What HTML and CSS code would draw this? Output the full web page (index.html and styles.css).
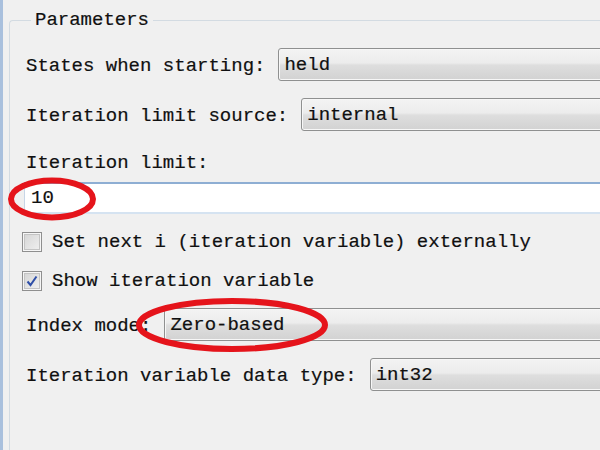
FILE: index.html
```html
<!DOCTYPE html>
<html>
<head>
<meta charset="utf-8">
<link rel="stylesheet" href="styles.css">
</head>
<body>
<div class="window">
  <fieldset class="params">
    <legend class="legend">Parameters</legend>
    <div class="row row-first">
      <span class="label">States when starting:</span>
      <div class="combo">held</div>
    </div>
    <div class="row row-next">
      <span class="label">Iteration limit source:</span>
      <div class="combo">internal</div>
    </div>
    <div class="caption">Iteration limit:</div>
    <div class="textbox">10</div>
    <label class="check check-first">
      <span class="box"></span>
      <span class="check-text">Set next i (iteration variable) externally</span>
    </label>
    <label class="check check-next">
      <span class="box">
        <svg class="tick" width="14" height="14" viewBox="0 0 14 14"><path d="M2.5 7.5 L5.5 11 L11.5 2.5" fill="none" stroke="#2f4fa8" stroke-width="2"/></svg>
      </span>
      <span class="check-text">Show iteration variable</span>
    </label>
    <div class="row row-index">
      <span class="label">Index mode:</span>
      <div class="combo">Zero-based</div>
    </div>
    <div class="row row-next">
      <span class="label">Iteration variable data type:</span>
      <div class="combo">int32</div>
    </div>
  </fieldset>
  <svg class="mark mark-limit" width="96" height="50" viewBox="0 0 96 50"><ellipse cx="45" cy="23" rx="41" ry="18.5" fill="none" stroke="#e5141b" stroke-width="6"/></svg>
  <svg class="mark mark-index" width="204" height="60" viewBox="0 0 204 60"><ellipse cx="98" cy="28" rx="93" ry="24" fill="none" stroke="#e5141b" stroke-width="6"/></svg>
</div>
</body>
</html>
```

FILE: styles.css
```css
html, body {
  margin: 0;
  padding: 0;
  width: 600px;
  height: 450px;
  overflow: hidden;
  background: #f0f0f0;
}

.window {
  position: relative;
  width: 600px;
  height: 450px;
  overflow: hidden;
  box-sizing: border-box;
  border-left: 3px solid #a9c0dd;
  padding: 10px 0 0 6px;
  font-family: "Liberation Mono", "DejaVu Sans Mono", monospace;
  font-size: 19px;
  color: #101010;
  -webkit-text-stroke: 0.2px #101010;
  background: #f0f0f0;
}

.params {
  margin: 0 -30px 0 0;
  padding: 18px 0 0 12px;
  height: 460px;
  box-sizing: border-box;
  border: 1px solid #d3dbe2;
  border-right: none;
  border-bottom: none;
  border-top-left-radius: 4px;
  display: flex;
  flex-direction: column;
  align-items: stretch;
}

.legend {
  margin-left: 9px;
  padding: 0 4px;
  line-height: 20px;
}

.row {
  display: flex;
  align-items: center;
  height: 33px;
  padding-left: 4px;
}

.row-next { margin-top: 17px; }
.row-index { margin-top: 16px; }

.label {
  white-space: pre;
  margin-right: 13px;
  line-height: 22px;
  padding-top: 2px;
}

.combo {
  flex: 1;
  height: 33px;
  box-sizing: border-box;
  border: 1px solid #8f9090;
  border-radius: 3px;
  box-shadow: inset 0 0 0 1px #f7f7f7;
  background: linear-gradient(#f3f3f3 0%, #ececec 45%, #dedede 52%, #d2d2d2 100%);
  padding-left: 5px;
  padding-top: 1px;
  line-height: 31px;
  white-space: pre;
}

.caption {
  margin-top: 21px;
  padding-left: 4px;
  line-height: 22px;
}

.textbox {
  margin-top: 8px;
  margin-left: 2px;
  height: 32px;
  box-sizing: border-box;
  background: #ffffff;
  border: 1px solid #c7d6e7;
  border-top: 2px solid #8eaed3;
  border-bottom: 2px solid #d5e3f1;
  padding-left: 6px;
  line-height: 28px;
}

.check {
  display: flex;
  align-items: center;
  height: 22px;
}

.check-first { margin-top: 17px; }
.check-next { margin-top: 17px; }

.box {
  width: 20px;
  height: 20px;
  box-sizing: border-box;
  border: 1px solid #8f8f8f;
  box-shadow: inset 0 0 0 1px #f6f6f6, inset 0 0 0 2px #c4c4c4;
  background: linear-gradient(135deg, #d4d4d4, #f1f1f1);
  display: flex;
  align-items: center;
  justify-content: center;
  margin-right: 10px;
}

.check-text {
  white-space: pre;
  line-height: 22px;
}

.mark {
  position: absolute;
  display: block;
}

.mark-limit {
  left: 4px;
  top: 176px;
}

.mark-index {
  left: 131px;
  top: 297px;
}
```
